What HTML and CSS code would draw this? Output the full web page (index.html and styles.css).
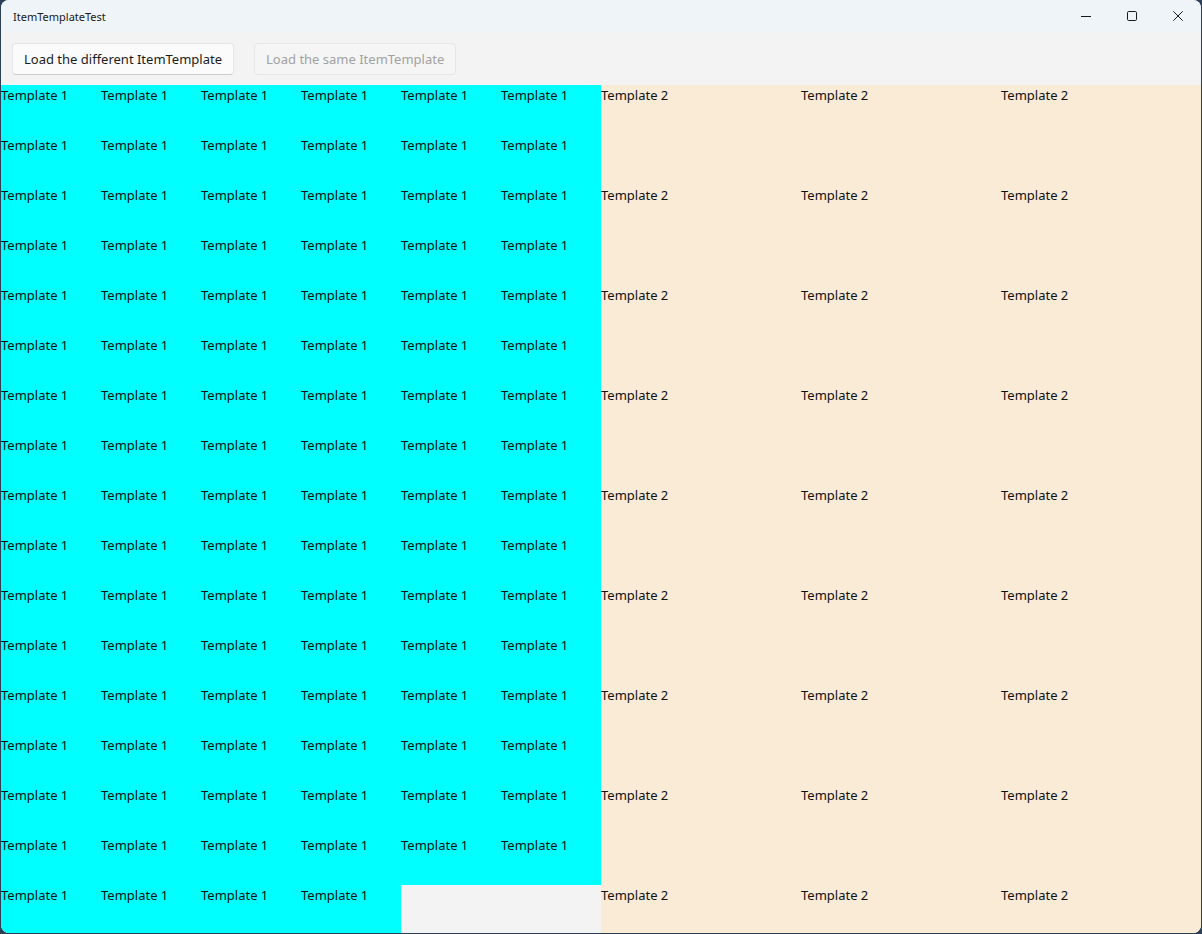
FILE: index.html
```html
<!DOCTYPE html>
<html>
<head>
<meta charset="utf-8">
<link rel="stylesheet" href="styles.css">
</head>
<body>
<div class="window">
  <div class="titlebar">
    <span class="title">ItemTemplateTest</span>
    <div class="caption">
      <div class="cap-btn"><svg width="10" height="10" viewBox="0 0 10 10"><path d="M0 5.5H10" stroke="#1a1a1a" stroke-width="1"/></svg></div>
      <div class="cap-btn"><svg width="10" height="10" viewBox="0 0 10 10"><rect x="0.5" y="0.5" width="9" height="9" rx="1.2" fill="none" stroke="#1a1a1a" stroke-width="1"/></svg></div>
      <div class="cap-btn"><svg width="10" height="10" viewBox="0 0 10 10"><path d="M0.3 0.3L9.7 9.7M9.7 0.3L0.3 9.7" stroke="#1a1a1a" stroke-width="1"/></svg></div>
    </div>
  </div>
  <div class="toolbar">
    <button class="btn">Load the different ItemTemplate</button>
    <button class="btn disabled" disabled>Load the same ItemTemplate</button>
  </div>
  <div class="content">
    <div class="grid1" id="g1"></div>
    <div class="grid2" id="g2"></div>
  </div>
</div>
<script src="script.js"></script>
</body>
</html>
```

FILE: script.js
```js
var g1 = document.getElementById('g1');
for (var i = 0; i < 100; i++) {
  var d = document.createElement('div');
  d.className = 'item1';
  d.textContent = 'Template 1';
  g1.appendChild(d);
}
var g2 = document.getElementById('g2');
for (var j = 0; j < 27; j++) {
  var e = document.createElement('div');
  e.className = 'item2';
  e.textContent = 'Template 2';
  g2.appendChild(e);
}
```

FILE: styles.css
```css
html, body {
  margin: 0;
  padding: 0;
}
body {
  background: #2d3f55;
  width: 1202px;
  height: 934px;
  overflow: hidden;
  font-family: "Noto Sans", "Open Sans", sans-serif;
}
.window {
  margin-left: 1px;
  width: 1200px;
  height: 933px;
  border-radius: 8px;
  overflow: hidden;
  background: #f3f3f3;
  display: flex;
  flex-direction: column;
}
.titlebar {
  height: 32px;
  flex: none;
  background: #eff4f9;
  display: flex;
  align-items: center;
  justify-content: space-between;
}
.title {
  font-size: 11px;
  color: #1a1a1a;
  padding-left: 12px;
  padding-top: 1px;
}
.caption {
  display: flex;
  height: 32px;
}
.cap-btn {
  width: 46px;
  height: 32px;
  display: flex;
  align-items: center;
  justify-content: center;
}
.toolbar {
  height: 53px;
  flex: none;
  box-sizing: border-box;
  padding: 11px 11px 0;
  display: flex;
  gap: 20px;
  align-items: flex-start;
}
.btn {
  height: 32px;
  box-sizing: border-box;
  padding: 0 11px 1px;
  font-family: "Noto Sans", "Open Sans", sans-serif;
  font-size: 13px;
  color: #1b1b1b;
  background: #fbfbfb;
  border: 1px solid #e5e5e5;
  border-bottom-color: #cccccc;
  border-radius: 4px;
}
.btn.disabled {
  background: #f5f5f5;
  color: #a2a2a2;
  border-color: #e6e6e6;
}
.content {
  flex: 1;
  display: flex;
  overflow: hidden;
}
.grid1 {
  width: 600px;
  flex: none;
  display: grid;
  grid-template-columns: repeat(6, 100px);
  grid-auto-rows: 50px;
  align-content: start;
}
.item1 {
  background: #00ffff;
  font-size: 13px;
  line-height: 20px;
  color: #111;
}
.grid2 {
  width: 600px;
  flex: none;
  display: grid;
  grid-template-columns: repeat(3, 200px);
  grid-auto-rows: 100px;
  align-content: start;
  background: #faebd7;
}
.item2 {
  background: #faebd7;
  font-size: 13px;
  line-height: 20px;
  color: #111;
}
```
